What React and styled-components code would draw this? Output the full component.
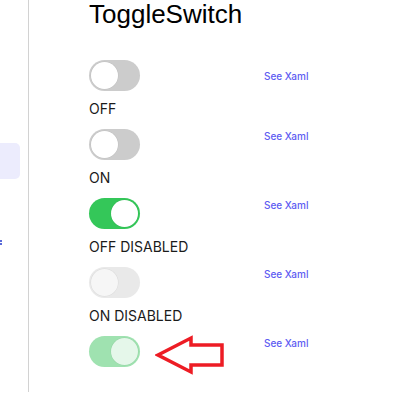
import React from "react";
import styled, { createGlobalStyle } from "styled-components";

const Global = createGlobalStyle`
  html, body { margin: 0; padding: 0; background: #ffffff; }
  body { font-family: Inter, "Noto Sans", sans-serif; }
`;

const Page = styled.div`
  display: flex;
  width: 393px;
  height: 393px;
  overflow: hidden;
  background: #fff;
`;

const Sidebar = styled.nav`
  width: 29px;
  height: 392px;
  flex: none;
  border-right: 1px solid #d2d2d2;
  padding-top: 143px;
  box-sizing: border-box;
  overflow: hidden;
  display: flex;
  flex-direction: column;
`;

const NavItem = styled.div`
  width: 30px;
  height: 36px;
  margin-left: -10px;
  border-radius: 5px;
  background: #ececfd;
`;

const NavMark = styled.div`
  width: 2px;
  height: 5px;
  margin-top: 61px;
  border-top: 2px dotted #5a6ad8;
  border-bottom: 2px dotted #5a6ad8;
  box-sizing: border-box;
`;

const Main = styled.main`
  position: relative;
  flex: 1;
  padding-left: 60px;
  display: flex;
  flex-direction: column;
`;

const Title = styled.h1`
  margin: 0 0 32px 0;
  font-family: "Liberation Sans", Arial, sans-serif;
  font-weight: 400;
  font-size: 26px;
  line-height: 28px;
  color: #000;
`;

const Item = styled.section`
  display: flex;
  flex-direction: column;
`;

const Row = styled.div`
  display: grid;
  grid-template-columns: 175px auto;
  align-items: start;
`;

const Track = styled.div`
  width: 51px;
  height: 31px;
  box-sizing: border-box;
  border-radius: 16px;
  padding: 2px;
  display: flex;
  justify-content: ${(p) => (p.$on ? "flex-end" : "flex-start")};
  background: ${(p) =>
    p.$on ? (p.$disabled ? "#9fe2b0" : "#34c759") : p.$disabled ? "#e9e9e9" : "#cccccc"};
`;

const Knob = styled.div`
  width: 27px;
  height: 27px;
  border-radius: 50%;
  background: ${(p) =>
    p.$disabled ? (p.$on ? "#e5f7ea" : "#f6f6f6") : "#ffffff"};
  box-shadow: 0 0 0 0.5px rgba(0, 0, 0, 0.06);
`;

const Link = styled.a`
  margin-top: ${(p) => p.$offset}px;
  font-family: Inter, sans-serif;
  font-size: 10px;
  font-weight: 500;
  line-height: 12px;
  color: #5d5cf2;
  text-decoration: none;
`;

const Label = styled.div`
  margin: 9px 0 12px 0;
  font-family: Inter, sans-serif;
  font-size: 14px;
  line-height: 17px;
  color: #1b1b1b;
`;

const Arrow = styled.svg`
  position: absolute;
  left: 126px;
  top: 335px;
`;

const Toggle = ({ on, disabled }) => (
  <Track $on={on} $disabled={disabled}>
    <Knob $on={on} $disabled={disabled} />
  </Track>
);

const items = [
  { on: false, disabled: false, label: "OFF", offset: 10 },
  { on: false, disabled: false, label: "ON", offset: 1 },
  { on: true, disabled: false, label: "OFF DISABLED", offset: 1 },
  { on: false, disabled: true, label: "ON DISABLED", offset: 1 },
  { on: true, disabled: true, label: null, offset: 1 },
];

export default function App() {
  return (
    <>
      <Global />
      <Page>
        <Sidebar>
          <NavItem />
          <NavMark />
        </Sidebar>
        <Main>
          <Title>ToggleSwitch</Title>
          {items.map((it, i) => (
            <Item key={i}>
              <Row>
                <Toggle on={it.on} disabled={it.disabled} />
                <Link href="#" $offset={it.offset}>See Xaml</Link>
              </Row>
              {it.label && <Label>{it.label}</Label>}
            </Item>
          ))}
          <Arrow width="72" height="42" viewBox="0 0 72 42">
            <polygon
              points="3,20 36,3 36,10 67,10 67,30 36,30 36,37"
              fill="none"
              stroke="#ed1c24"
              strokeWidth="3.5"
              strokeLinejoin="miter"
            />
          </Arrow>
        </Main>
      </Page>
    </>
  );
}
